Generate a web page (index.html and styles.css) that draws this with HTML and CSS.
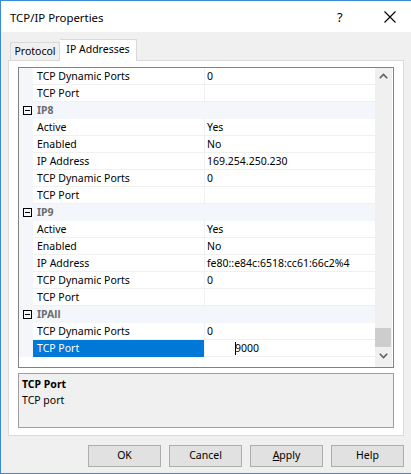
FILE: index.html
```html
<!DOCTYPE html>
<html>
<head>
<meta charset="utf-8">
<link rel="stylesheet" href="styles.css">
</head>
<body>
<div class="window">
  <div class="titlebar">
    <span class="title">TCP/IP Properties</span>
    <span class="help-q">?</span>
    <span class="close">
      <svg width="12" height="12" viewBox="0 0 12 12"><path d="M0.5 0.5 L11.5 11.5 M11.5 0.5 L0.5 11.5" stroke="#000" stroke-width="1.1" fill="none"/></svg>
    </span>
  </div>
  <div class="content">
    <div class="tabs">
      <div class="tab">Protocol</div>
      <div class="tab active">IP Addresses</div>
    </div>
    <div class="panel">
      <div class="grid">
        <div class="rows">
          <div class="row"><span class="m"></span><span class="n">TCP Dynamic Ports</span><span class="v">0</span></div>
          <div class="row"><span class="m"></span><span class="n">TCP Port</span><span class="v"></span></div>
          <div class="row cat"><span class="m"><i class="box"></i></span><span class="n">IP8</span><span class="v"></span></div>
          <div class="row"><span class="m"></span><span class="n">Active</span><span class="v">Yes</span></div>
          <div class="row"><span class="m"></span><span class="n">Enabled</span><span class="v">No</span></div>
          <div class="row"><span class="m"></span><span class="n">IP Address</span><span class="v">169.254.250.230</span></div>
          <div class="row"><span class="m"></span><span class="n">TCP Dynamic Ports</span><span class="v">0</span></div>
          <div class="row"><span class="m"></span><span class="n">TCP Port</span><span class="v"></span></div>
          <div class="row cat"><span class="m"><i class="box"></i></span><span class="n">IP9</span><span class="v"></span></div>
          <div class="row"><span class="m"></span><span class="n">Active</span><span class="v">Yes</span></div>
          <div class="row"><span class="m"></span><span class="n">Enabled</span><span class="v">No</span></div>
          <div class="row"><span class="m"></span><span class="n">IP Address</span><span class="v">fe80::e84c:6518:cc61:66c2%4</span></div>
          <div class="row"><span class="m"></span><span class="n">TCP Dynamic Ports</span><span class="v">0</span></div>
          <div class="row"><span class="m"></span><span class="n">TCP Port</span><span class="v"></span></div>
          <div class="row cat"><span class="m"><i class="box"></i></span><span class="n">IPAll</span><span class="v"></span></div>
          <div class="row"><span class="m"></span><span class="n">TCP Dynamic Ports</span><span class="v">0</span></div>
          <div class="row sel"><span class="m"></span><span class="n">TCP Port</span><span class="v"><i class="caret"></i>9000</span></div>
        </div>
        <div class="scrollbar">
          <svg class="arrow" width="9" height="6" viewBox="0 0 9 6"><path d="M0.8 5.2 L4.5 1.5 L8.2 5.2" stroke="#606060" stroke-width="1.6" fill="none"/></svg>
          <div class="track"></div>
          <div class="thumb"></div>
          <svg class="arrow" width="9" height="6" viewBox="0 0 9 6"><path d="M0.8 0.8 L4.5 4.5 L8.2 0.8" stroke="#606060" stroke-width="1.6" fill="none"/></svg>
        </div>
      </div>
      <div class="desc">
        <div class="desc-title">TCP Port</div>
        <div class="desc-text">TCP port</div>
      </div>
    </div>
    <div class="buttons">
      <div class="btn">OK</div>
      <div class="btn">Cancel</div>
      <div class="btn"><u>A</u>pply</div>
      <div class="btn">Help</div>
    </div>
  </div>
</div>
</body>
</html>
```
FILE: styles.css
```css
* { box-sizing: border-box; }
html, body { margin: 0; padding: 0; }
body {
  width: 411px;
  height: 474px;
  overflow: hidden;
  font-family: "Noto Sans", "Open Sans", sans-serif;
  font-size: 10.5px;
  color: #000;
}
.window {
  width: 411px;
  height: 474px;
  border: 1px solid #3a8ad8;
  border-right: none;
  background: #f0f0f0;
  display: flex;
  flex-direction: column;
}
.titlebar {
  height: 31px;
  background: #fff;
  display: flex;
  align-items: center;
  padding-left: 9px;
  flex: none;
}
.title { font-size: 11.4px; flex: 1; padding-top: 1px; }
.help-q { font-size: 13px; width: 10px; margin-right: 37px; padding-top: 1px; }
.close { width: 12px; height: 12px; margin-right: 15px; display: flex; }
.content {
  flex: 1;
  display: flex;
  flex-direction: column;
  padding: 7px 7px 0 7px;
}
.tabs {
  display: flex;
  align-items: flex-end;
  padding-left: 2px;
  height: 21px;
  position: relative;
  z-index: 1;
}
.tab {
  height: 18px;
  width: 50px;
  text-align: center;
  border: 1px solid #d9d9d9;
  border-bottom: none;
  background: #f0f0f0;
  line-height: 17px;
}
.tab.active {
  width: 77px;
  height: 22px;
  margin-bottom: -1px;
  background: #fff;
  border-left: none;
  line-height: 18px;
}
.panel {
  width: 396px;
  height: 376px;
  border: 1px solid #d9d9d9;
  background: #fff;
  padding: 6px 0 0 9px;
  display: flex;
  flex-direction: column;
}
.grid {
  width: 376px;
  height: 301px;
  border: 1px solid #828282;
  display: flex;
  background: #fff;
}
.rows { width: 356px; display: flex; flex-direction: column; }
.row {
  height: 17px;
  display: grid;
  grid-template-columns: 14px 171px 171px;
}
.row span { height: 17px; line-height: 16px; white-space: nowrap; overflow: hidden; }
.m { background: #f4f6fa; display: flex; align-items: center; justify-content: center; }
.n { padding-left: 4px; border-bottom: 1px solid #f0f0f0; }
.v { padding-left: 2px; border-left: 1px solid #f0f0f0; border-bottom: 1px solid #f0f0f0; position: relative; }
.row.cat span { background: #f3f6fb; border-color: #f3f6fb; }
.row.cat .n { font-weight: bold; color: #6d6d6d; }
.box {
  width: 9px; height: 9px;
  border: 1px solid #000;
  position: relative;
  display: block;
  margin-left: 2px;
  margin-top: -1px;
}
.box::after {
  content: "";
  position: absolute;
  left: 1px; top: 3px;
  width: 5px; height: 1px;
  background: #000;
}
.row.sel .n { background: #0078d7; color: #fff; border-color: #0078d7; }
.row.sel .v { padding-left: 30px; color: #000; }
.caret {
  position: absolute;
  left: 30px; top: 2px;
  width: 1px; height: 13px;
  background: #000;
}
.scrollbar {
  width: 17px;
  background: #f0f0f0;
  display: flex;
  flex-direction: column;
  align-items: center;
}
.scrollbar .arrow { margin-top: 5px; flex: none; }
.track { height: 249px; flex: none; }
.thumb { width: 16px; height: 19px; background: #cdcdcd; flex: none; margin-left: -1px; }
.scrollbar .arrow:last-child { margin-top: 6px; }
.desc {
  margin-top: 5px;
  width: 376px;
  height: 55px;
  border: 1px solid #a0a0a0;
  background: #f0f0f0;
  padding: 2px 0 0 3px;
}
.desc-title { font-weight: bold; line-height: 16px; }
.desc-text { line-height: 17px; }
.buttons {
  display: flex;
  justify-content: flex-end;
  gap: 8px;
  margin-top: 9px;
}
.btn {
  width: 73px;
  height: 22px;
  border: 1px solid #adadad;
  background: #e1e1e1;
  text-align: center;
  line-height: 19px;
}
.btn u { text-decoration: underline; }
```
